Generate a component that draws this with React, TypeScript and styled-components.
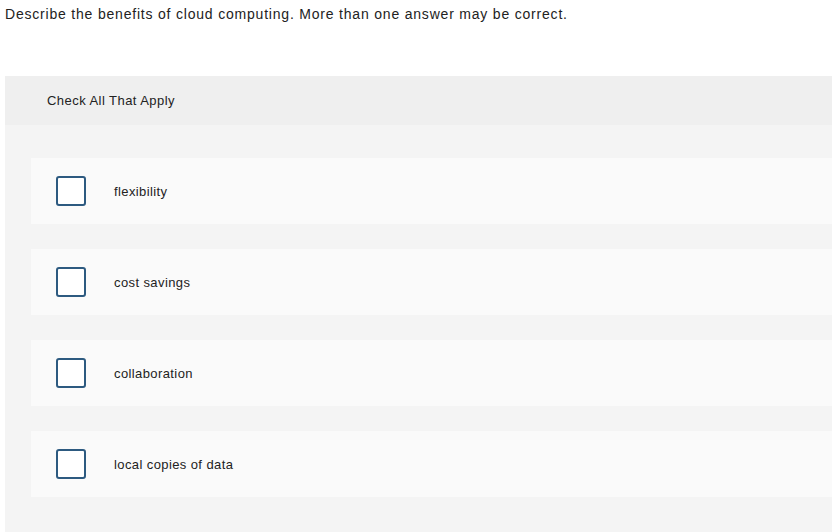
import React, { useState } from 'react';
import styled, { createGlobalStyle } from 'styled-components';

const GlobalStyle = createGlobalStyle`
  body {
    margin: 0;
    background: #ffffff;
    font-family: "Liberation Sans", Arial, sans-serif;
    color: #222;
  }
`;

const Page = styled.div`
  width: 832px;
  height: 532px;
  overflow: hidden;
`;

const Prompt = styled.p`
  margin: 0;
  padding: 6px 0 0 5px;
  font-size: 14px;
  line-height: 16px;
  letter-spacing: 0.8px;
  color: #222;
`;

const Panel = styled.section`
  margin: 54px 0 0 5px;
  background: #f4f4f4;
  padding-bottom: 40px;
`;

const PanelHeader = styled.header`
  height: 49px;
  display: flex;
  align-items: center;
  padding-left: 42px;
  background: #efefef;
  font-size: 13px;
  letter-spacing: 0.45px;
  color: #222;
`;

const OptionList = styled.div`
  display: flex;
  flex-direction: column;
  gap: 25px;
  padding: 33px 0 0 26px;
`;

const OptionCard = styled.label`
  height: 66px;
  display: flex;
  align-items: center;
  padding-left: 25px;
  background: #fafafa;
  cursor: pointer;
`;

const Box = styled.span<{ checked: boolean }>`
  width: 30px;
  height: 30px;
  box-sizing: border-box;
  border: 2px solid #2d5a80;
  border-radius: 3px;
  background: ${({ checked }) => (checked ? '#2d5a80' : '#fff')};
  flex-shrink: 0;
`;

const OptionText = styled.span`
  margin-left: 28px;
  font-size: 13px;
  letter-spacing: 0.4px;
  color: #222;
`;

const OPTIONS = ['flexibility', 'cost savings', 'collaboration', 'local copies of data'];

export default function App() {
  const [checked, setChecked] = useState<boolean[]>(OPTIONS.map(() => false));

  const toggle = (i: number) =>
    setChecked((cur) => cur.map((c, idx) => (idx === i ? !c : c)));

  return (
    <Page>
      <GlobalStyle />
      <Prompt>
        Describe the benefits of cloud computing. More than one answer may be correct.
      </Prompt>
      <Panel>
        <PanelHeader>Check All That Apply</PanelHeader>
        <OptionList>
          {OPTIONS.map((opt, i) => (
            <OptionCard key={opt} onClick={() => toggle(i)}>
              <Box checked={checked[i]} />
              <OptionText>{opt}</OptionText>
            </OptionCard>
          ))}
        </OptionList>
      </Panel>
    </Page>
  );
}
